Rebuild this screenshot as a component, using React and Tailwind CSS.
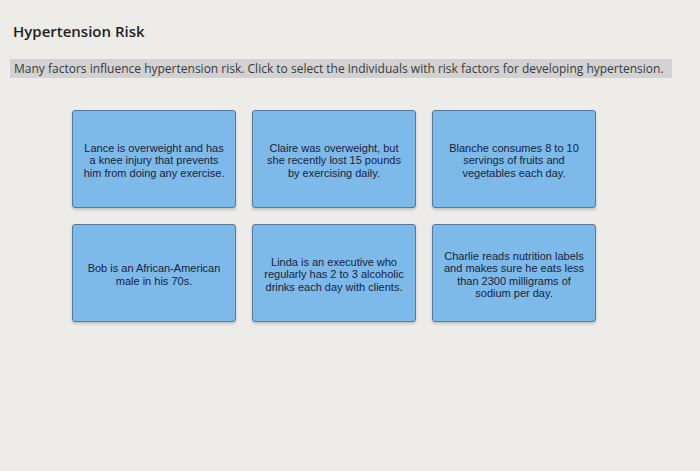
import React, { useState } from "react";

const people = [
  "Lance is overweight and has a knee injury that prevents him from doing any exercise.",
  "Claire was overweight, but she recently lost 15 pounds by exercising daily.",
  "Blanche consumes 8 to 10 servings of fruits and vegetables each day.",
  "Bob is an African-American male in his 70s.",
  "Linda is an executive who regularly has 2 to 3 alcoholic drinks each day with clients.",
  "Charlie reads nutrition labels and makes sure he eats less than 2300 milligrams of sodium per day.",
];

// fixed widths so the lines break like the original cards
const widths = ["w-[146px]", "w-[144px]", "w-[130px]", "w-[144px]", "w-[144px]", "w-[146px]"];

export default function App() {
  const [picked, setPicked] = useState([]);

  const toggle = (i) =>
    setPicked((p) => (p.includes(i) ? p.filter((x) => x !== i) : [...p, i]));

  return (
    <div className="w-[700px] h-[471px] bg-[#edece9] font-['Open_Sans',sans-serif] overflow-hidden">
      <h1 className="pt-[20px] pl-[13px] text-[15px] font-semibold text-[#1f1f1f] leading-[22px]">
        Hypertension Risk
      </h1>

      <div className="mt-[17px] mx-[10px] w-[662px] bg-[#d3d2d2] pl-[4px] py-[1px] text-[12px] leading-[17px] text-[#3a3a3a] whitespace-nowrap">
        Many factors influence hypertension risk. Click to select the individuals with risk factors for developing hypertension.
      </div>

      {/* answer cards */}
      <div className="mt-[32px] ml-[72px] grid grid-cols-[164px_164px_164px] gap-x-[16px] gap-y-[16px]">
        {people.map((text, i) => (
          <button
            key={i}
            onClick={() => toggle(i)}
            className={`h-[98px] flex items-center justify-center rounded-[3px] border border-[#58789a] shadow-[0_2px_3px_rgba(0,0,0,0.18)] ${
              picked.includes(i) ? "bg-[#5a9fd8]" : "bg-[#7db9e9]"
            }`}
          >
            <span
              className={`${widths[i]} pt-[3px] text-center font-['Liberation_Sans',Arial,sans-serif] text-[11px] leading-[12.5px] text-[#17243d]`}
            >
              {text}
            </span>
          </button>
        ))}
      </div>
    </div>
  );
}
